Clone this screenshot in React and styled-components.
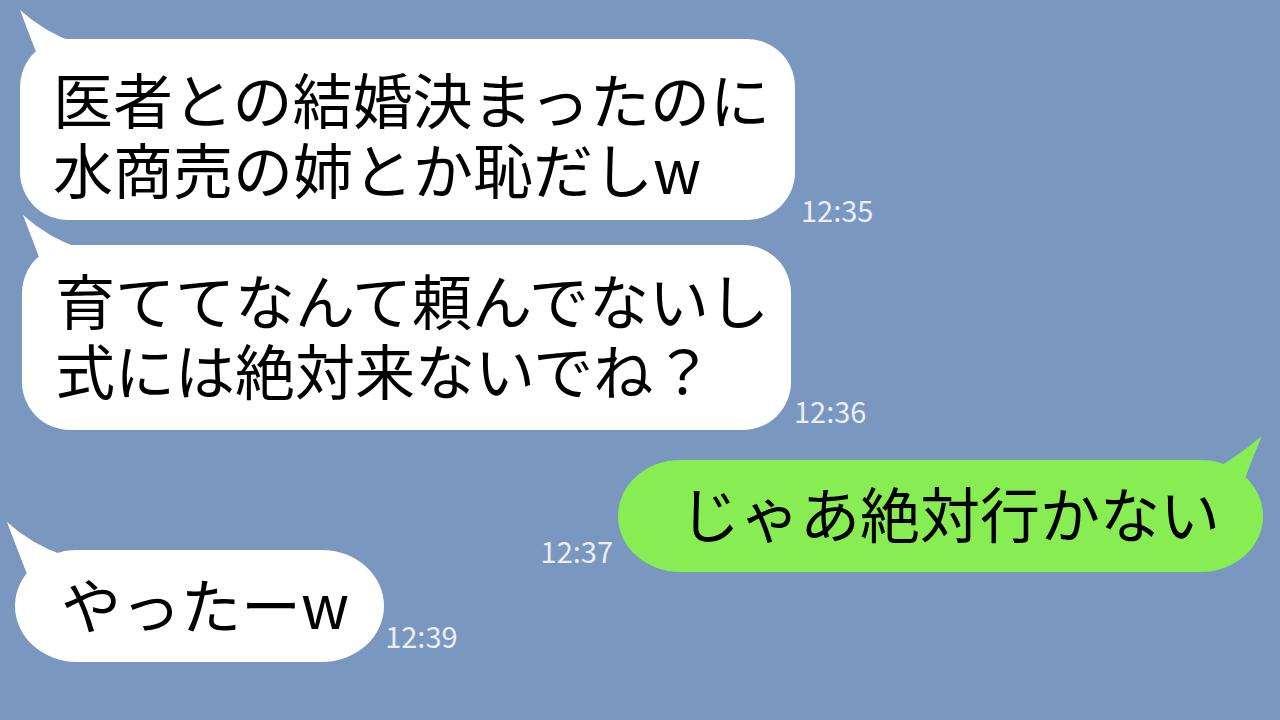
import React from "react";
import styled, { createGlobalStyle } from "styled-components";

const Global = createGlobalStyle`
  html, body { margin: 0; padding: 0; background: #7a97c0; }
  * { box-sizing: border-box; }
`;

const Chat = styled.div`
  width: 1280px;
  height: 720px;
  overflow: hidden;
  background: #7a97c0;
  display: flex;
  flex-direction: column;
  padding-top: 39px;
  font-family: "Noto Sans CJK JP", "Noto Sans", sans-serif;
`;

const Row = styled.div`
  display: flex;
  align-items: flex-end;
  justify-content: ${(p) => (p.$mine ? "flex-end" : "flex-start")};
  gap: ${(p) => p.$gap}px;
  margin-top: ${(p) => p.$mt}px;
  padding-left: ${(p) => p.$pl || 0}px;
  padding-right: ${(p) => p.$pr || 0}px;
`;

const Bubble = styled.div`
  position: relative;
  background: ${(p) => (p.$mine ? "#87ed52" : "#ffffff")};
  border-radius: ${(p) => p.$radius};
  padding: ${(p) => p.$pad};
  color: #000;
  font-size: 60px;
  line-height: 70px;
  white-space: nowrap;
`;

const Line = styled.div`
  position: relative;
  display: block;
`;

const Tail = styled.svg`
  position: absolute;
  top: ${(p) => p.$top}px;
  ${(p) => (p.$mine ? `right: ${p.$x}px;` : `left: ${p.$x}px;`)}
  overflow: visible;
`;

const Time = styled.span`
  font-size: 29px;
  line-height: 1;
  color: #e9eef7;
  margin-bottom: ${(p) => p.$mb}px;
`;

function LeftTail({ x, top }) {
  return (
    <Tail $x={x} $top={top} width="60" height="60" viewBox="0 0 60 60">
      <path d="M0 0 Q9 24 20 52 L58 52 L58 34 Q24 22 0 0 Z" fill="#ffffff" />
    </Tail>
  );
}

function RightTail({ x, top }) {
  return (
    <Tail $mine $x={x} $top={top} width="50" height="50" viewBox="0 0 50 50">
      <path d="M48 0 Q26 18 8 29 L8 50 L32 50 L32 40 Q40 18 48 0 Z" fill="#87ed52" />
    </Tail>
  );
}

const messages = [
  {
    id: 1,
    lines: ["医者との結婚決まったのに", "水商売の姉とか恥だしw"],
    time: "12:35",
    mt: 0,
    pl: 20,
    gap: 6,
    mb: -4,
    pad: "24px 25px 17px 33px",
    radius: "48px",
    tailX: 0,
    tailTop: -29,
  },
  {
    id: 2,
    lines: ["育ててなんて頼んでないし", "式には絶対来ないでね？"],
    time: "12:36",
    mt: 25,
    pl: 22,
    gap: 3,
    mb: 5,
    pad: "19px 22px 26px 33px",
    radius: "48px",
    tailX: 1,
    tailTop: -30,
  },
  {
    id: 3,
    mine: true,
    lines: ["じゃあ絶対行かない"],
    time: "12:37",
    mt: 30,
    pr: 17,
    gap: 5,
    mb: 7,
    pad: "17px 43px 25px 62px",
    radius: "62px / 56px",
    tailX: -1,
    tailTop: -24,
  },
  {
    id: 4,
    lines: ["やったーw"],
    time: "12:39",
    mt: -22,
    pl: 15,
    gap: 1,
    mb: 12,
    pad: "18px 35px 24px 46px",
    radius: "62px / 56px",
    tailX: -8,
    tailTop: -28,
  },
];

export default function App() {
  return (
    <>
      <Global />
      <Chat>
        {messages.map((m) => (
          <Row key={m.id} $mine={m.mine} $mt={m.mt} $pl={m.pl} $pr={m.pr} $gap={m.gap}>
            {m.mine && <Time $mb={m.mb}>{m.time}</Time>}
            <Bubble $mine={m.mine} $pad={m.pad} $radius={m.radius}>
              {m.mine ? (
                <RightTail x={m.tailX} top={m.tailTop} />
              ) : (
                <LeftTail x={m.tailX} top={m.tailTop} />
              )}
              {m.lines.map((l) => (
                <Line key={l}>{l}</Line>
              ))}
            </Bubble>
            {!m.mine && <Time $mb={m.mb}>{m.time}</Time>}
          </Row>
        ))}
      </Chat>
    </>
  );
}
